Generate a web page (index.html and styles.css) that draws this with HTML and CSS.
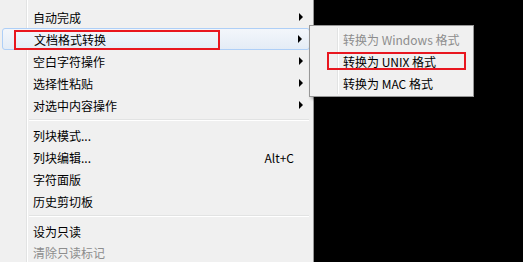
FILE: index.html
```html
<!DOCTYPE html>
<html lang="zh-CN">
<head>
    <meta charset="UTF-8">
    <title>右键菜单 - 文档格式转换</title>
    <link rel="stylesheet" href="styles.css">
</head>
<body>
    <div class="menu">
        <div class="item"><span class="label">自动完成</span><span class="arrow"></span></div>
        <div class="item active">
            <span class="label">文档格式转换</span><span class="arrow"></span>
            <span class="mark mark-main"></span>
        </div>
        <div class="item"><span class="label">空白字符操作</span><span class="arrow"></span></div>
        <div class="item"><span class="label">选择性粘贴</span><span class="arrow"></span></div>
        <div class="item"><span class="label">对选中内容操作</span><span class="arrow"></span></div>
        <div class="sep"></div>
        <div class="item"><span class="label">列块模式...</span></div>
        <div class="item"><span class="label">列块编辑...</span><span class="key">Alt+C</span></div>
        <div class="item"><span class="label">字符面版</span></div>
        <div class="item"><span class="label">历史剪切板</span></div>
        <div class="sep"></div>
        <div class="item"><span class="label">设为只读</span></div>
        <div class="item last disabled"><span class="label">清除只读标记</span></div>
    </div>

    <div class="submenu">
        <div class="item disabled"><span class="label">转换为 Windows 格式</span></div>
        <div class="item"><span class="label">转换为 UNIX 格式</span></div>
        <div class="item"><span class="label">转换为 MAC 格式</span></div>
        <span class="mark mark-sub"></span>
    </div>
</body>
</html>
```

FILE: styles.css
```css
:root {
    --menu-bg: #f0f0f0;
    --menu-border: #979797;
    --gutter-dark: #e2e3e3;
    --text: #000000;
    --text-disabled: #8d8d8d;
    --hover-border: #aecff7;
    --annotation: #e8161f;
}

* {
    margin: 0;
    padding: 0;
    box-sizing: border-box;
}

body {
    background-color: #000000;
    font-family: "Noto Sans CJK SC", "Noto Sans", sans-serif;
    font-size: 12px;
    color: var(--text);
    height: 262px;
    overflow: hidden;
    position: relative;
}

.menu {
    position: relative;
    width: 314px;
    height: 262px;
    padding-top: 6px;
    background-color: var(--menu-bg);
    border-right: 1px solid var(--menu-border);
}

/* icon gutter on the left */
.menu::before {
    content: "";
    position: absolute;
    top: 0;
    bottom: 0;
    left: 26px;
    width: 1px;
    background-color: var(--gutter-dark);
    border-right: 1px solid #ffffff;
}

.item {
    position: relative;
    display: flex;
    align-items: center;
    height: 22px;
    padding-left: 33px;
    white-space: nowrap;
}

.item.last {
    height: 20px;
    padding-top: 1px;
}

.item.active {
    margin: 0 3px 0 2px;
    padding-left: 31px;
    border: 1px solid var(--hover-border);
    border-radius: 3px;
    background: linear-gradient(to bottom, #f3f6fb, #e4ecf6);
}

.item.disabled {
    color: var(--text-disabled);
}

.arrow {
    margin-left: auto;
    margin-right: 10px;
    width: 0;
    height: 0;
    border-left: 4px solid #000000;
    border-top: 4px solid transparent;
    border-bottom: 4px solid transparent;
}

.item.active .arrow {
    margin-right: 7px;
}

.key {
    margin-left: auto;
    margin-right: 19px;
}

.sep {
    height: 8px;
    margin-left: 29px;
    margin-right: 4px;
    display: flex;
    align-items: center;
}

.sep::after {
    content: "";
    flex: 1;
    height: 1px;
    background-color: var(--gutter-dark);
    border-bottom: 1px solid #ffffff;
    box-sizing: content-box;
}

.submenu {
    position: absolute;
    left: 309px;
    top: 25px;
    width: 165px;
    height: 72px;
    padding-top: 2px;
    background-color: var(--menu-bg);
    border: 1px solid var(--menu-border);
    box-shadow: 2px 2px 3px rgba(0, 0, 0, 0.3);
}

.submenu::before {
    content: "";
    position: absolute;
    top: 2px;
    bottom: 2px;
    left: 27px;
    width: 1px;
    background-color: var(--gutter-dark);
    border-right: 1px solid #ffffff;
}

.submenu .item {
    padding-left: 33px;
}

/* red annotation boxes drawn over the screenshot */
.mark {
    position: absolute;
    border: 2px solid var(--annotation);
    pointer-events: none;
}

.mark-main {
    left: 11px;
    top: 1px;
    width: 206px;
    height: 20px;
}

.mark-sub {
    left: 17px;
    top: 26px;
    width: 139px;
    height: 18px;
}
```
